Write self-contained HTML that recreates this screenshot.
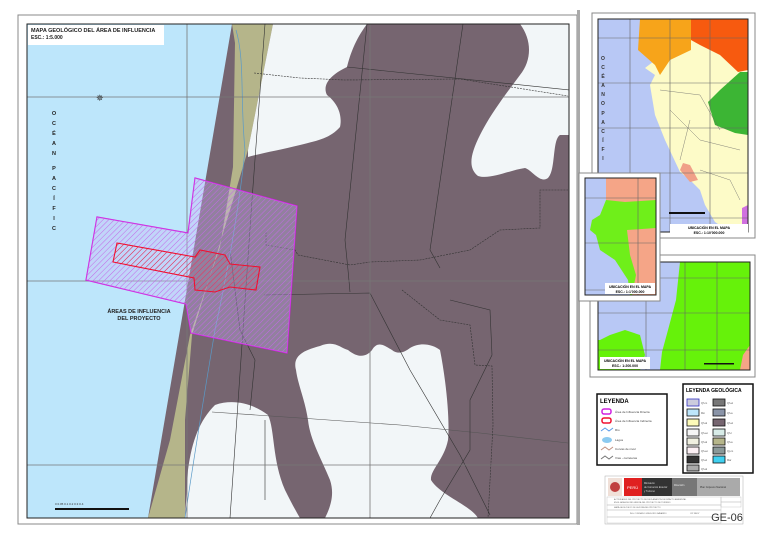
<!DOCTYPE html>
<html><head><meta charset="utf-8"><style>
html,body{margin:0;padding:0;background:#fff;width:768px;height:542px;overflow:hidden}
svg{display:block}
text{font-family:"Liberation Sans",sans-serif}
</style></head><body>
<svg width="768" height="542" viewBox="0 0 768 542" xmlns="http://www.w3.org/2000/svg">
<defs>
<pattern id="hm" width="4" height="4" patternUnits="userSpaceOnUse" patternTransform="rotate(45)">
<line x1="0" y1="0" x2="0" y2="4" stroke="#c040e0" stroke-width="1"/></pattern>
<pattern id="hr" width="4" height="4" patternUnits="userSpaceOnUse" patternTransform="rotate(45)">
<line x1="0" y1="0" x2="0" y2="4" stroke="#e83040" stroke-width="1"/></pattern>
<clipPath id="cm"><rect x="27" y="24" width="542" height="494"/></clipPath>
<clipPath id="cp"><rect x="598" y="19" width="150" height="213"/></clipPath>
<clipPath id="cs"><rect x="585" y="178" width="71" height="117"/></clipPath>
<clipPath id="cl"><rect x="598" y="262" width="152" height="108"/></clipPath>
</defs>
<rect x="18" y="15" width="559" height="509" fill="#fff" stroke="#888" stroke-width="1"/>
<g clip-path="url(#cm)">
<rect x="27" y="24" width="542" height="494" fill="#bde6fb"/>
<path d="M232,24 L569,24 L569,518 L148,518 Z" fill="#766570"/>
<path d="M232,24 L273,24 L248,150 L218,250 L192,335 L185,420 L185,518 L148,518 L170,440 L190,335 L220,247 L233,167 L235,43 Z" fill="#b5b58a"/>
<path d="M273,24 L367,24 C355,40 350,55 347,67 C330,75 322,85 327,95 C340,105 342,118 340,127 C330,138 320,140 300,145 C280,150 262,153 248,157 L248,150 Z" fill="#f2f6f8"/>
<path d="M520,24 L569,24 L569,135 L560,135 C552,140 556,170 548,178 C540,184 532,170 525,168 C510,170 490,180 478,176 C468,168 470,155 480,135 C490,115 505,95 520,75 C532,60 532,40 520,24 Z" fill="#f2f6f8"/>
<path d="M185,518 L188,470 C192,440 200,420 215,405 C235,398 255,405 268,415 C275,430 272,460 285,490 C295,510 300,518 300,518 Z" fill="#f2f6f8"/>
<path d="M296,370 C292,355 305,350 320,346 C335,340 340,348 348,350 C360,360 368,355 372,350 C378,340 385,346 392,350 C398,355 405,352 410,348 C420,342 432,344 440,350 C446,380 450,420 448,440 C444,460 430,470 431,480 C440,495 470,505 478,518 L325,518 C330,508 335,495 330,480 C322,460 310,440 308,420 C305,400 298,385 296,370 Z" fill="#f2f6f8"/>
<g stroke="#333" stroke-width="0.6" fill="none">
<path d="M265,24 L252,200 L230,518"/>
<path d="M367,24 L345,240 L348,270 L350,292"/>
<path d="M463,24 L430,250 L440,268"/>
<path d="M347,67 L570,90"/>
<path d="M254,73 L300,78 L345,80 L460,79 L568,96" stroke-dasharray="2,1"/>
<path d="M266,232 L266,245 L295,250 L298,255 L350,265 L370,262 L420,260 L470,250 L500,230 L540,228 L540,190 L568,190" stroke-dasharray="2,1"/>
<path d="M264,295 L370,293 L410,370 L460,455 L490,515"/>
<path d="M212,412 L300,418 L400,425 L480,433 L568,443" stroke="#555"/>
<path d="M450,300 L490,310 L492,355 L470,400 L470,450 L440,500 L430,518"/>
<path d="M402,290 L440,320 L470,325 L475,365 L492,366 L493,425 L488,518" stroke-dasharray="2,1"/>
<path d="M230,250 L240,330 L255,360 L250,410"/>
<path d="M265,420 L265,500"/>
</g>
<path d="M236,30 C245,60 240,100 245,150 C240,200 230,260 215,330 C205,390 195,450 185,518" stroke="#5a9ac8" stroke-width="0.7" fill="none"/>
<g stroke="#777" stroke-width="0.8">
<line x1="187" y1="24" x2="187" y2="518"/><line x1="370" y1="24" x2="370" y2="518"/>
<line x1="27" y1="97" x2="569" y2="97"/><line x1="27" y1="281" x2="569" y2="281"/><line x1="27" y1="465" x2="569" y2="465"/>
</g>
<path d="M195,178 L297,206 L287,353 L191,333 L186,304 L86,280 L97,217 L188,233 Z" fill="url(#hm)" stroke="#d020e0" stroke-width="1.2"/>
<path d="M195,178 L297,206 L287,353 L191,333 L186,304 L86,280 L97,217 L188,233 Z" fill="#c8b4f5" fill-opacity="0.35"/>
<path d="M117,243 L195,257 L200,250 L225,255 L230,264 L260,267 L256,290 L230,287 L215,292 L195,290 L194,278 L113,262 Z" fill="url(#hr)" stroke="#f01030" stroke-width="1.1"/>
</g>
<rect x="27" y="24" width="542" height="494" fill="none" stroke="#222" stroke-width="1"/>
<rect x="28" y="25" width="136" height="20" fill="#fff"/>
<text x="31" y="32" font-size="5.5" font-weight="bold" fill="#222">MAPA GEOLÓGICO DEL ÁREA DE INFLUENCIA</text>
<text x="31" y="39" font-size="5" font-weight="bold" fill="#222">ESC.: 1:5.000</text>
<g font-size="5.5" font-weight="bold" fill="#222" text-anchor="middle">
<text x="54" y="115">O</text><text x="54" y="125">C</text><text x="54" y="135">É</text><text x="54" y="145">A</text><text x="54" y="155">N</text>
<text x="54" y="170">P</text><text x="54" y="180">A</text><text x="54" y="190">C</text><text x="54" y="200">Í</text><text x="54" y="210">F</text><text x="54" y="220">I</text><text x="54" y="230">C</text>
</g>
<text x="139" y="313" font-size="5.5" font-weight="bold" text-anchor="middle" fill="#222">ÁREAS DE INFLUENCIA</text>
<text x="139" y="320" font-size="5.5" font-weight="bold" text-anchor="middle" fill="#222">DEL PROYECTO</text>
<text x="96" y="101" font-size="9" fill="#333">✵</text>
<rect x="55" y="508" width="74" height="2" fill="#111"/>
<text x="55" y="505" font-size="3" fill="#333">0  0.05 0.1     0.2     0.3     0.4</text>
<rect x="577" y="10" width="3" height="515" fill="#aaa"/>
<rect x="592" y="13" width="163" height="225" fill="#fff" stroke="#888"/>
<g clip-path="url(#cp)">
<rect x="598" y="19" width="150" height="213" fill="#b8c8f5"/>
<path d="M640,19 L748,19 L748,232 L730,232 L715,222 L705,205 L700,190 L690,180 L680,172 L665,140 L655,115 L650,85 L655,75 L645,68 L658,58 L640,35 Z" fill="#fdfbc8"/>
<path d="M640,19 L691,19 L691,50 L670,60 L660,75 L655,65 L638,50 Z" fill="#f7a41a"/>
<path d="M691,19 L748,19 L748,70 L738,72 L720,55 L700,45 L691,40 Z" fill="#f75a0f"/>
<path d="M748,72 L740,72 L720,90 L708,102 L715,125 L735,133 L748,135 Z" fill="#3cb534"/>
<path d="M742,208 L748,205 L748,232 L742,232 Z" fill="#d070e0"/>
<path d="M683,163 L690,165 L698,180 L690,182 L680,170 Z" fill="#f0a088"/>
<g stroke="#666" stroke-width="0.6"><line x1="598" y1="38" x2="748" y2="38"/><line x1="598" y1="83" x2="748" y2="83"/><line x1="598" y1="128" x2="748" y2="128"/><line x1="598" y1="173" x2="748" y2="173"/><line x1="598" y1="218" x2="748" y2="218"/><line x1="630" y1="19" x2="630" y2="232"/><line x1="670" y1="19" x2="670" y2="232"/><line x1="710" y1="19" x2="710" y2="232"/></g>
<g stroke="#666" stroke-width="0.4" fill="none"><path d="M660,90 L700,95 L720,130 M670,110 L700,140 L740,150 M690,120 L680,160 M700,170 L730,180 L740,200"/></g>
</g>
<rect x="598" y="19" width="150" height="213" fill="none" stroke="#222"/>
<g font-size="5" font-weight="bold" fill="#333" text-anchor="middle"><text x="603" y="60">O</text><text x="603" y="69">C</text><text x="603" y="78">É</text><text x="603" y="87">A</text><text x="603" y="96">N</text><text x="603" y="105">O</text><text x="603" y="115">P</text><text x="603" y="124">A</text><text x="603" y="133">C</text><text x="603" y="142">Í</text><text x="603" y="151">F</text><text x="603" y="160">I</text></g>
<rect x="669" y="212" width="36" height="2" fill="#111"/>
<rect x="670" y="224" width="78" height="12" fill="#fff"/>
<text x="709" y="229" font-size="3.5" font-weight="bold" text-anchor="middle">UBICACIÓN EN EL MAPA</text>
<text x="709" y="234" font-size="3.5" font-weight="bold" text-anchor="middle">ESC.: 1:10'000.000</text>
<rect x="590" y="255" width="165" height="122" fill="#fff" stroke="#888"/>
<g clip-path="url(#cl)">
<rect x="598" y="262" width="152" height="108" fill="#66f20a"/>
<path d="M598,262 L680,262 L676,300 L668,330 L662,352 L660,370 L640,370 L645,355 L640,335 L625,330 L610,335 L600,340 L598,340 Z" fill="#b8c8f5"/>
<path d="M743,355 L750,345 L750,370 L740,370 Z" fill="#f5a587"/>
<g stroke="#666" stroke-width="0.6"><line x1="598" y1="278" x2="750" y2="278"/><line x1="598" y1="313" x2="750" y2="313"/><line x1="598" y1="350" x2="750" y2="350"/><line x1="646" y1="262" x2="646" y2="370"/><line x1="685" y1="262" x2="685" y2="370"/><line x1="717" y1="262" x2="717" y2="370"/></g>
</g>
<rect x="598" y="262" width="152" height="108" fill="none" stroke="#222"/>
<rect x="704" y="363" width="30" height="1.5" fill="#111"/>
<rect x="600" y="357" width="50" height="12" fill="#fff"/>
<text x="625" y="362" font-size="3.5" font-weight="bold" text-anchor="middle">UBICACIÓN EN EL MAPA</text>
<text x="625" y="367" font-size="3.5" font-weight="bold" text-anchor="middle">ESC.: 1:200.000</text>
<rect x="579" y="173" width="81" height="128" fill="#fff" stroke="#888"/>
<g clip-path="url(#cs)">
<rect x="585" y="178" width="71" height="117" fill="#b8c8f5"/>
<path d="M606,178 L656,178 L656,295 L630,295 L628,280 L615,260 L600,250 L596,235 L590,230 L592,220 L600,215 L606,200 Z" fill="#6fef1a"/>
<path d="M606,178 L656,178 L656,200 L625,202 L606,200 Z" fill="#f5a587"/>
<path d="M627,230 L656,228 L656,295 L632,295 L636,275 L630,255 Z" fill="#f5a587"/>
<g stroke="#666" stroke-width="0.6"><line x1="585" y1="198" x2="656" y2="198"/><line x1="585" y1="243" x2="656" y2="243"/><line x1="585" y1="290" x2="656" y2="290"/><line x1="638" y1="178" x2="638" y2="295"/></g>
</g>
<rect x="585" y="178" width="71" height="117" fill="none" stroke="#222"/>
<rect x="605" y="283" width="50" height="11" fill="#fff"/>
<text x="630" y="288" font-size="3.5" font-weight="bold" text-anchor="middle">UBICACIÓN EN EL MAPA</text>
<text x="630" y="293" font-size="3.5" font-weight="bold" text-anchor="middle">ESC.: 1:1'000.000</text>
<rect x="597" y="394" width="70" height="71" fill="#fff" stroke="#111" stroke-width="1.5"/>
<text x="600" y="403" font-size="6" font-weight="bold">LEYENDA</text>
<rect x="602" y="409" width="9" height="5" rx="2" fill="none" stroke="#d020e0" stroke-width="1.5"/>
<rect x="602" y="418" width="9" height="5" rx="2" fill="none" stroke="#f01030" stroke-width="1.5"/>
<path d="M601,431 L605,428 L609,431 L613,428" stroke="#5a9ae8" fill="none"/>
<ellipse cx="607" cy="440" rx="5" ry="3" fill="#8ccaf0"/>
<path d="M601,450 L605,447 L609,450 L613,447" stroke="#c09080" fill="none"/>
<path d="M601,459 L605,456 L609,459 L613,456" stroke="#777" fill="none"/>
<g font-size="3" fill="#444"><text x="615" y="413">Área de Influencia Directa</text><text x="615" y="422">Área de Influencia Indirecta</text><text x="615" y="431">Río</text><text x="615" y="441">Lagos</text><text x="615" y="450">Curvas de nivel</text><text x="615" y="459">Vías - carreteras</text></g>
<rect x="683" y="384" width="70" height="89" fill="#fff" stroke="#111" stroke-width="1.5"/>
<text x="686" y="392" font-size="5" font-weight="bold">LEYENDA GEOLÓGICA</text>
<g stroke="#111" stroke-width="0.8">
<rect x="687" y="399" width="12" height="7" fill="#ccccdd" stroke="#3030c0"/>
<rect x="687" y="409" width="12" height="7" fill="#bde6fb"/>
<rect x="687" y="419" width="12" height="7" fill="#fdfbb8"/>
<rect x="687" y="429" width="12" height="7" fill="#f5f5f5"/>
<rect x="687" y="438" width="12" height="7" fill="#f0f0e0"/>
<rect x="687" y="447" width="12" height="7" fill="#fcf0f4"/>
<rect x="687" y="456" width="12" height="7" fill="#333"/>
<rect x="687" y="465" width="12" height="6" fill="#aaa"/>
<rect x="713" y="399" width="12" height="7" fill="#777"/>
<rect x="713" y="409" width="12" height="7" fill="#8a94a8"/>
<rect x="713" y="419" width="12" height="7" fill="#766570"/>
<rect x="713" y="429" width="12" height="7" fill="#d8ece8"/>
<rect x="713" y="438" width="12" height="7" fill="#b5b58a"/>
<rect x="713" y="447" width="12" height="7" fill="#8a9898"/>
<rect x="713" y="456" width="12" height="7" fill="#40d0f0"/>
</g>
<g font-size="2.5" fill="#555"><text x="701" y="404">Qh-m</text><text x="701" y="414">Rio</text><text x="701" y="424">Qh-al</text><text x="701" y="434">Qh-eo</text><text x="701" y="443">Qh-al</text><text x="701" y="452">Qh-eo</text><text x="701" y="461">Qh-el</text><text x="701" y="470">Qh-al</text>
<text x="727" y="404">Qh-el</text><text x="727" y="414">Qh-a</text><text x="727" y="424">Qh-el</text><text x="727" y="434">Qh-l</text><text x="727" y="443">Qh-a</text><text x="727" y="452">Qp-m</text><text x="727" y="461">Mar</text></g>
<rect x="605" y="476" width="138" height="48" fill="#fff" stroke="#aaa" stroke-width="0.5"/>
<rect x="608" y="478" width="14" height="18" fill="#f0e0d8"/>
<circle cx="615" cy="487" r="5" fill="#c04040"/>
<rect x="624" y="478" width="18" height="18" fill="#e02020"/>
<text x="627" y="489" font-size="4" fill="#fff">PERÚ</text>
<rect x="642" y="478" width="30" height="18" fill="#333"/>
<text x="644" y="484" font-size="2.5" fill="#ddd">Ministerio</text><text x="644" y="488" font-size="2.5" fill="#ddd">de Comercio Exterior</text><text x="644" y="492" font-size="2.5" fill="#ddd">y Turismo</text>
<rect x="672" y="478" width="25" height="18" fill="#777"/>
<text x="674" y="486" font-size="2.5" fill="#eee">Dirección</text>
<rect x="697" y="478" width="43" height="18" fill="#aaa"/>
<text x="700" y="488" font-size="2.5" fill="#333">Plan Copesco Nacional</text>
<g stroke="#bbb" stroke-width="0.4" fill="none">
<rect x="607" y="497" width="114" height="8"/><rect x="607" y="505" width="114" height="5"/><rect x="607" y="510" width="114" height="7"/><rect x="607" y="517" width="114" height="6"/>
<rect x="721" y="497" width="20" height="5"/><rect x="721" y="502" width="20" height="5"/>
</g>
<g font-size="2" fill="#666"><text x="614" y="500">ACTIVIDADES DEL PROYECTO DE DECLARACIÓN DE IMPACTO AMBIENTAL</text><text x="614" y="503">EN EL ÁREA DE INFLUENCIA DEL PROYECTO DE TURISMO</text><text x="614" y="508">MAPA GEOLÓGICO DE LA ZONA DEL PROYECTO</text><text x="630" y="514">ING. CONRADO GREGORIO NAVARRO</text><text x="690" y="514">CIP 38497</text></g>
<text x="727" y="521" font-size="11" fill="#333" text-anchor="middle">GE-06</text>
</svg>
</body></html>
